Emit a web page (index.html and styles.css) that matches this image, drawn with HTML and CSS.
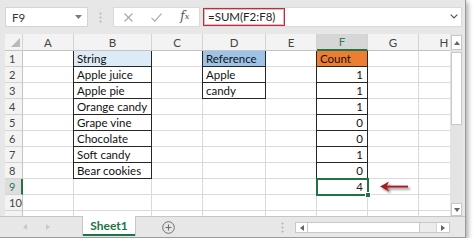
FILE: index.html
```html
<!DOCTYPE html>
<html>
<head>
<meta charset="utf-8">
<title>Excel COUNT example</title>
<link rel="stylesheet" href="styles.css">
</head>
<body>
<div class="window">
  <div class="fbar">
    <div class="namebox"><span>F9</span><svg class="nb-arrow" width="7" height="4" viewBox="0 0 7 4"><path d="M0 0H7L3.5 4Z" fill="#7a7a7a"/></svg></div>
    <div class="vdots"><svg width="3" height="11" viewBox="0 0 3 11"><circle cx="1.5" cy="1.5" r="1" fill="#b4b4b4"/><circle cx="1.5" cy="5.5" r="1" fill="#b4b4b4"/><circle cx="1.5" cy="9.5" r="1" fill="#b4b4b4"/></svg></div>
    <div class="btns">
      <span class="slot"><svg width="9" height="9" viewBox="0 0 9 9"><path d="M0.5 0.5L8.5 8.5M8.5 0.5L0.5 8.5" stroke="#a8a8a8" stroke-width="1.1" fill="none"/></svg></span>
      <span class="slot"><svg width="11" height="9" viewBox="0 0 11 9"><path d="M0.5 4.8L3.8 8.2L10.5 0.6" stroke="#a8a8a8" stroke-width="1.1" fill="none"/></svg></span>
      <span class="slot fx">f<sub>x</sub></span>
    </div>
    <div class="formula">
      <span class="ftext">=SUM(F2:F8)</span>
      <svg class="chev" width="8" height="5" viewBox="0 0 8 5"><path d="M0.7 0.7L4 4L7.3 0.7" stroke="#555" stroke-width="1.2" fill="none"/></svg>
    </div>
  </div>

  <div class="main">
    <div class="sheet">
      <div class="h corner"><svg width="9" height="9" viewBox="0 0 9 9"><path d="M9 0V9H0Z" fill="#b9b9b9"/></svg></div>
      <div class="h">A</div><div class="h">B</div><div class="h">C</div><div class="h">D</div><div class="h">E</div><div class="h hs">F</div><div class="h">G</div><div class="h">H</div>

      <div class="r">1</div><div class="c"></div><div class="c bx1 lb">String</div><div class="c"></div><div class="c bx1 db">Reference</div><div class="c"></div><div class="c bx1 or">Count</div><div class="c"></div><div class="c"></div>
      <div class="r">2</div><div class="c"></div><div class="c bx">Apple juice</div><div class="c"></div><div class="c bx">Apple</div><div class="c"></div><div class="c bx n">1</div><div class="c"></div><div class="c"></div>
      <div class="r">3</div><div class="c"></div><div class="c bx">Apple pie</div><div class="c"></div><div class="c bx">candy</div><div class="c"></div><div class="c bx n">1</div><div class="c"></div><div class="c"></div>
      <div class="r">4</div><div class="c"></div><div class="c bx">Orange candy</div><div class="c"></div><div class="c"></div><div class="c"></div><div class="c bx n">1</div><div class="c"></div><div class="c"></div>
      <div class="r">5</div><div class="c"></div><div class="c bx">Grape vine</div><div class="c"></div><div class="c"></div><div class="c"></div><div class="c bx n">0</div><div class="c"></div><div class="c"></div>
      <div class="r">6</div><div class="c"></div><div class="c bx">Chocolate</div><div class="c"></div><div class="c"></div><div class="c"></div><div class="c bx n">0</div><div class="c"></div><div class="c"></div>
      <div class="r">7</div><div class="c"></div><div class="c bx">Soft candy</div><div class="c"></div><div class="c"></div><div class="c"></div><div class="c bx n">1</div><div class="c"></div><div class="c"></div>
      <div class="r">8</div><div class="c"></div><div class="c bx">Bear cookies</div><div class="c"></div><div class="c"></div><div class="c"></div><div class="c bx n">0</div><div class="c"></div><div class="c"></div>
      <div class="r rs">9</div><div class="c"></div><div class="c"></div><div class="c"></div><div class="c"></div><div class="c"></div><div class="c n sel">4<span class="handle"></span></div><div class="c"></div><div class="c"></div>
      <div class="r">10</div><div class="c"></div><div class="c"></div><div class="c"></div><div class="c"></div><div class="c"></div><div class="c"></div><div class="c"></div><div class="c"></div>
      <div class="r"></div><div class="c"></div><div class="c"></div><div class="c"></div><div class="c"></div><div class="c"></div><div class="c"></div><div class="c"></div><div class="c"></div>
    </div>
    <div class="vscroll">
      <div class="vbtn up"><svg width="6" height="4" viewBox="0 0 6 4"><path d="M0 4H6L3 0Z" fill="#666"/></svg></div>
      <div class="vthumb"></div>
      <div class="vtrack"></div>
      <div class="vbtn down"><svg width="6" height="4" viewBox="0 0 6 4"><path d="M0 0H6L3 4Z" fill="#666"/></svg></div>
    </div>
  </div>

  <div class="tabbar">
    <div class="nav">
      <svg width="4" height="6" viewBox="0 0 4 6"><path d="M4 0V6L0 3Z" fill="#c8c8c8"/></svg>
      <svg width="4" height="6" viewBox="0 0 4 6"><path d="M0 0V6L4 3Z" fill="#c8c8c8"/></svg>
    </div>
    <div class="tab">Sheet1</div>
    <div class="plus"><svg width="13" height="13" viewBox="0 0 13 13"><circle cx="6.5" cy="6.5" r="5.8" stroke="#6e6e6e" stroke-width="1" fill="none"/><path d="M6.5 3.5V9.5M3.5 6.5H9.5" stroke="#6e6e6e" stroke-width="1.1"/></svg></div>
    <div class="hdots"><svg width="3" height="11" viewBox="0 0 3 11"><circle cx="1.5" cy="1.5" r="1" fill="#b4b4b4"/><circle cx="1.5" cy="5.5" r="1" fill="#b4b4b4"/><circle cx="1.5" cy="9.5" r="1" fill="#b4b4b4"/></svg></div>
    <div class="hscroll">
      <div class="hbtn left"><svg width="4" height="6" viewBox="0 0 4 6"><path d="M4 0V6L0 3Z" fill="#666"/></svg></div>
      <div class="hthumb"></div>
      <div class="htrack"></div>
      <div class="hbtn right"><svg width="4" height="6" viewBox="0 0 4 6"><path d="M0 0V6L4 3Z" fill="#666"/></svg></div>
    </div>
  </div>
</div>

<svg class="pointer" width="36" height="18" viewBox="0 0 36 18">
  <defs>
    <filter id="sh" x="-20%" y="-40%" width="150%" height="200%">
      <feGaussianBlur in="SourceAlpha" stdDeviation="1.2"/>
      <feOffset dx="1.5" dy="2" result="b"/>
      <feComponentTransfer><feFuncA type="linear" slope="0.45"/></feComponentTransfer>
      <feMerge><feMergeNode/><feMergeNode in="SourceGraphic"/></feMerge>
    </filter>
  </defs>
  <g filter="url(#sh)">
    <path d="M8 6.6H30V8.6H8Z" fill="#a51d24"/>
    <path d="M2 7.6L11 2.6L8.6 7.6L11 12.6Z" fill="#a51d24"/>
  </g>
</svg>
</body>
</html>
```

FILE: styles.css
```css
* {
  box-sizing: border-box;
}

body {
  margin: 0;
  background: #ffffff;
  font-family: "Lato", "Liberation Sans", sans-serif;
}

.window {
  width: 466px;
  height: 238px;
  background: #e7e7e7;
  border-right: 1px solid #9b9b9b;
  border-bottom: 1px solid #9b9b9b;
  box-shadow: 2px 2px 5px rgba(0, 0, 0, 0.35);
  display: flex;
  flex-direction: column;
  overflow: hidden;
}

/* formula bar */
.fbar {
  flex: none;
  height: 34px;
  display: flex;
  align-items: flex-start;
  padding: 7px 0 0 5px;
}

.namebox {
  width: 83px;
  height: 20px;
  background: #ffffff;
  border: 1px solid #d4d4d4;
  display: flex;
  align-items: center;
  justify-content: space-between;
  padding: 0 5px 0 6px;
  font-size: 11.5px;
  color: #333333;
}

.vdots {
  width: 25px;
  height: 20px;
  display: flex;
  align-items: center;
  justify-content: center;
}

.btns {
  width: 87px;
  height: 20px;
  background: #ffffff;
  border: 1px solid #dadada;
  display: flex;
  align-items: center;
}

.slot {
  width: 29px;
  height: 18px;
  display: flex;
  align-items: center;
  justify-content: center;
}

.fx {
  font-family: "DejaVu Serif", "Liberation Serif", serif;
  font-style: italic;
  font-size: 12px;
  color: #555555;
  padding-bottom: 2px;
}

.fx sub {
  font-size: 8px;
  vertical-align: -1px;
}

.formula {
  width: 259px;
  height: 20px;
  margin-left: 3px;
  background: #ffffff;
  border: 1px solid #dadada;
  display: flex;
  align-items: flex-start;
  justify-content: space-between;
  padding-right: 3px;
}

.ftext {
  margin-left: -1px;
  width: 82px;
  height: 18px;
  border: 1px solid #c22c3a;
  box-shadow: inset 0 0 0 1px rgba(194, 44, 58, 0.35);
  padding-left: 4px;
  font-size: 11.5px;
  line-height: 16px;
  color: #222222;
}

.chev {
  margin-top: 6px;
}

/* grid */
.main {
  flex: none;
  height: 182px;
  display: flex;
  padding-left: 5px;
  padding-right: 2px;
}

.sheet {
  width: 445px;
  height: 182px;
  overflow: hidden;
  background: #ffffff;
  display: grid;
  grid-template-columns: 18px 51px 78px 51px 63px 51px 51px 51px 51px;
  grid-template-rows: 17px repeat(11, 16px);
  font-size: 11.5px;
  color: #111111;
}

.c {
  border-right: 1px solid #dadada;
  border-bottom: 1px solid #dadada;
  line-height: 16px;
  padding: 0 2px 0 3px;
  white-space: nowrap;
}

.h {
  background: #f3f3f3;
  border-right: 1px solid #d3d3d3;
  border-bottom: 1px solid #c4c4c4;
  color: #444444;
  font-size: 11.5px;
  line-height: 17px;
  text-align: center;
}

.corner {
  display: flex;
  align-items: flex-end;
  justify-content: flex-end;
  padding: 0 2px 3px 0;
}

.hs {
  background: #d6d6d6;
  color: #3e7b58;
  border-bottom: 2px solid #217346;
  line-height: 16px;
}

.r {
  background: #f3f3f3;
  border-right: 1px solid #c4c4c4;
  border-bottom: 1px solid #d3d3d3;
  color: #444444;
  font-size: 11px;
  line-height: 16px;
  padding-left: 4px;
}

.rs {
  background: #dedede;
  color: #2f7a52;
  border-right: 2px solid #217346;
}

.bx {
  border-right: 1px solid #262626;
  border-bottom: 1px solid #262626;
  box-shadow: -1px 0 0 #262626, 0 -1px 0 #262626, -1px -1px 0 #262626;
}

.bx1 {
  border-right: 1px solid #262626;
  border-bottom: 1px solid #262626;
  box-shadow: -1px 0 0 #262626;
}

.lb {
  background: #ddebf7;
}

.db {
  background: #9dc3e6;
}

.or {
  background: #ed7d31;
}

.n {
  text-align: right;
  padding-right: 4px;
}

.sel {
  position: relative;
  outline: 2px solid #217346;
  outline-offset: -1px;
  color: #222222;
}

.handle {
  position: absolute;
  right: -4px;
  bottom: -4px;
  width: 6px;
  height: 6px;
  background: #217346;
  border: 1px solid #ffffff;
}

/* vertical scrollbar */
.vscroll {
  width: 13px;
  height: 182px;
  background: #e3e3e3;
  display: flex;
  flex-direction: column;
  align-items: center;
  padding: 1px 0 0;
}

.vbtn {
  width: 11px;
  background: #ffffff;
  border: 1px solid #c8c8c8;
  display: flex;
  justify-content: center;
}

.vbtn.up {
  height: 15px;
  align-items: center;
}

.vbtn.down {
  height: 13px;
  align-items: center;
}

.vthumb {
  width: 11px;
  height: 73px;
  margin-top: 2px;
  background: #ffffff;
  border: 1px solid #c8c8c8;
}

.vtrack {
  flex: 1;
}

/* sheet tabs */
.tabbar {
  flex: none;
  height: 21px;
  border-top: 1px solid #c6c6c6;
  display: flex;
  align-items: flex-start;
}

.nav {
  width: 83px;
  height: 20px;
  display: flex;
  align-items: center;
  padding-left: 23px;
  gap: 19px;
}

.tab {
  width: 52px;
  height: 20px;
  margin-top: -1px;
  background: #ffffff;
  border-bottom: 2px solid #217346;
  box-shadow: -1px 0 0 #c6c6c6, 1px 0 0 #c6c6c6;
  color: #217346;
  font-size: 12px;
  font-weight: bold;
  display: flex;
  align-items: center;
  justify-content: center;
  padding-top: 1px;
}

.plus {
  width: 66px;
  height: 20px;
  display: flex;
  align-items: center;
  justify-content: center;
}

.hdots {
  width: 94px;
  height: 20px;
  display: flex;
  align-items: center;
  padding-left: 80px;
}

.hscroll {
  width: 155px;
  height: 11px;
  margin-top: 5px;
  border: 1px solid #c8c8c8;
  background: #ececec;
  display: flex;
}

.hbtn {
  background: #ffffff;
  display: flex;
  align-items: center;
  justify-content: center;
}

.hbtn.left {
  width: 11px;
}

.hbtn.right {
  width: 13px;
  border-left: 1px solid #d4d4d4;
}

.hthumb {
  width: 113px;
  background: #ffffff;
  border-left: 1px solid #c8c8c8;
  border-right: 1px solid #c8c8c8;
}

.htrack {
  flex: 1;
}

/* annotation arrow */
.pointer {
  position: absolute;
  left: 378px;
  top: 179px;
}
```
